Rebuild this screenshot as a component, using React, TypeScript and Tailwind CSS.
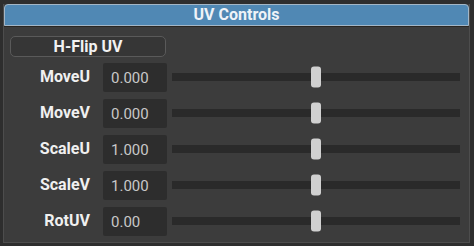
import React from "react";

const rows = [
  { label: "MoveU", value: "0.000", pct: 50 },
  { label: "MoveV", value: "0.000", pct: 50 },
  { label: "ScaleU", value: "1.000", pct: 50 },
  { label: "ScaleV", value: "1.000", pct: 50 },
  { label: "RotUV", value: "0.00", pct: 50 },
];

export default function App() {
  return (
    <div
      className="w-[474px] h-[246px] bg-[#2e2e2e] pt-[4px] pl-[3px] overflow-hidden"
      style={{ fontFamily: "Roboto, 'Liberation Sans', sans-serif" }}
    >
      <div className="w-[467px] h-[239px] bg-[#3c3c3c] border-l border-r border-b border-[#4d4d4d] flex flex-col">
        <div className="h-[23px] border-b border-[#2a2622]">
          <div className="h-[22px] bg-[#5088b4] border border-[#a3b6c6] rounded-t-[4px] flex items-center justify-center text-[16px] font-bold text-[#eef3f8] leading-none">
            UV Controls
          </div>
        </div>
        <div className="pt-[9px] pl-[6px]">
          <div className="w-[156px] h-[21px] rounded-[5px] border border-[#5a5a5a] bg-[#363636] flex items-center justify-center text-[16px] font-bold text-[#f2f2f2] leading-none">
            H-Flip UV
          </div>
        </div>
        <div className="mt-[6px] flex flex-col gap-[8px]">
          {rows.map((r) => (
            <div key={r.label} className="h-[28px] flex items-center">
              <div className="w-[86px] text-right text-[16px] font-bold text-[#f0f0f0] leading-none">
                {r.label}
              </div>
              <div className="ml-[13px] w-[64px] h-[29px] bg-[#2d2d2d] rounded-[2px] flex items-center pl-[8px] text-[15px] text-[#c8c8c8] leading-none pt-[2px]">
                {r.value}
              </div>
              <div className="ml-[5px] w-[288px] h-[8px] bg-[#2a2a2a] relative">
                <div
                  className="absolute top-1/2 -translate-y-1/2 -translate-x-1/2 w-[10px] h-[21px] rounded-[3px] bg-[#d0d0d0]"
                  style={{ left: `${r.pct}%` }}
                />
              </div>
            </div>
          ))}
        </div>
      </div>
    </div>
  );
}
